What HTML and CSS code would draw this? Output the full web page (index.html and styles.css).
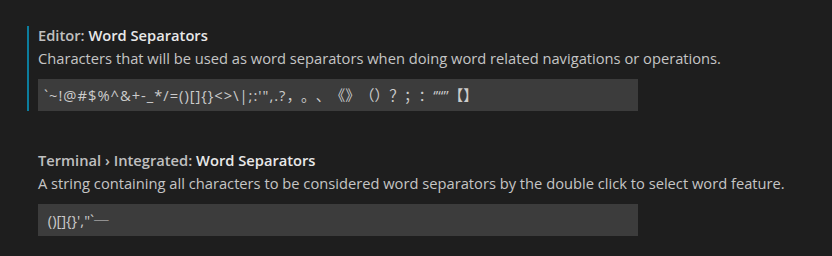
FILE: index.html
```html
<!DOCTYPE html>
<html lang="en">

<head>
    <meta charset="UTF-8">
    <meta name="viewport" content="width=device-width, initial-scale=1.0">
    <title>Settings</title>
    <link rel="stylesheet" href="styles.css">
</head>

<body>
    <div class="settings-list">
        <div class="setting-item modified">
            <div class="setting-title">
                <span class="setting-category">Editor: </span><span class="setting-label">Word Separators</span>
            </div>
            <div class="setting-description">
                Characters that will be used as word separators when doing word related navigations or operations.
            </div>
            <div class="setting-input"><span class="ascii">`~!@#$%^&amp;+-_*/=()[]{}&lt;&gt;\|;:'",.?</span>，。、《》（）？；：‘’“”【】</div>
        </div>

        <div class="setting-item">
            <div class="setting-title">
                <span class="setting-category">Terminal › Integrated: </span><span class="setting-label">Word Separators</span>
            </div>
            <div class="setting-description">
                A string containing all characters to be considered word separators by the double click to select word feature.
            </div>
            <div class="setting-input"> ()[]{}',"`─</div>
        </div>
    </div>
</body>

</html>
```

FILE: styles.css
```css
* {
    margin: 0;
    padding: 0;
    box-sizing: border-box;
}

html,
body {
    background-color: #1e1e1e;
    color: #cccccc;
    height: 100%;
}

body {
    font-family: "Open Sans", "Noto Sans CJK SC", sans-serif;
    font-size: 14.7px;
    line-height: 18px;
}

.settings-list {
    display: flex;
    flex-direction: column;
    gap: 40px;
    padding: 26px 0 0 27px;
}

.setting-item {
    border-left: 2px solid transparent;
    padding-left: 9px;
}

.setting-item.modified {
    /* modified indicator */
    border-left-color: #0c7d9d;
}

.setting-title {
    font-weight: 600;
    white-space: nowrap;
}

.setting-category {
    color: #c0c0c0;
}

.setting-label {
    color: #e8e8e8;
}

.setting-description {
    margin-top: 5px;
    color: #c5c5c5;
    white-space: nowrap;
}

.setting-input {
    margin-top: 12px;
    width: 600px;
    height: 32px;
    padding: 0 6px;
    background-color: #3c3c3c;
    color: #cccccc;
    line-height: 32px;
    white-space: pre;
    overflow: hidden;
    text-spacing-trim: space-all;
}

.setting-input .ascii {
    letter-spacing: 1px;
}
```
